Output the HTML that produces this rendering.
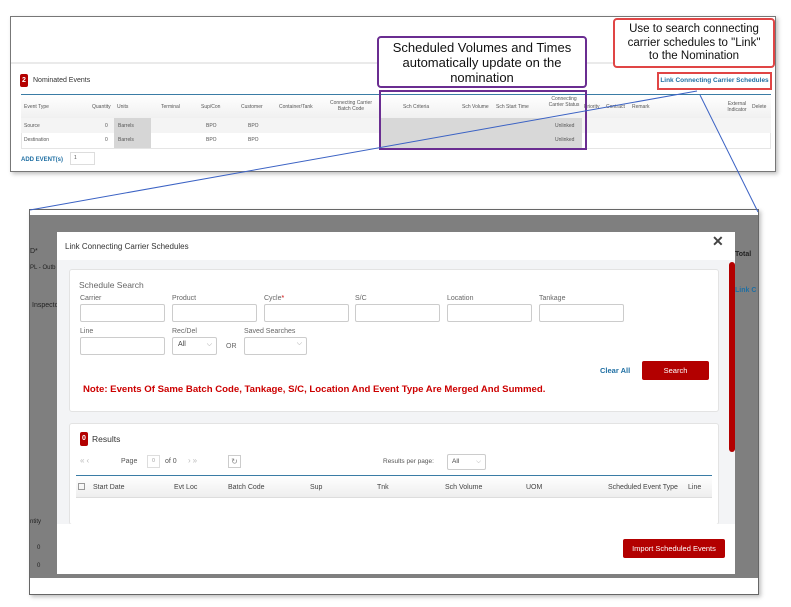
<!DOCTYPE html>
<html><head><style>
*{box-sizing:border-box;margin:0;padding:0}
body{width:791px;height:607px;position:relative;background:#fff;font-family:"Liberation Sans",Arial,sans-serif;overflow:hidden}
.a{position:absolute}
.top{left:10px;top:16px;width:766px;height:156px;border:1px solid #777;background:#fff;box-shadow:2px 2px 4px rgba(0,0,0,.25)}
.th{font-size:5px;color:#555;text-align:center;line-height:6px}
.cell{position:absolute;font-size:5px;color:#555}
.callout{background:#fff;text-align:center;font-size:13px;color:#111;line-height:15px;border-radius:4px}
.lbl{font-size:7px;color:#666}
.inp{position:absolute;height:18px;border:1px solid #ccc;border-radius:2px;background:#fff}
.hd{position:absolute;font-size:7px;color:#444;top:484px}
</style></head><body>

<div class="a top"></div>
<div class="a" style="left:11px;top:62px;width:764px;height:2px;background:#eaeaea"></div>
<div class="a" style="left:20px;top:74px;width:8px;height:13px;background:#b30000;border-radius:2px;color:#fff;font-size:7px;text-align:center;line-height:13px;font-weight:bold">2</div>
<div class="a" style="left:33px;top:77px;font-size:7px;color:#333">Nominated Events</div>
<div class="a" style="left:21px;top:94px;width:750px;height:1px;background:#3a7ca5"></div>
<div class="a" style="left:21px;top:95px;width:750px;height:54px;background:#fff;border:1px solid #e5e5e5"></div>
<div class="a" style="left:21px;top:95px;width:750px;height:23px;background:linear-gradient(#fff,#f0f0f0)"></div>
<div class="a" style="left:21px;top:118px;width:750px;height:15px;background:#f4f4f4"></div>
<div class="a" style="left:114px;top:118px;width:37px;height:30px;background:#d6d6d6"></div>
<div class="a" style="left:379px;top:118px;width:203px;height:30px;background:#d8d8d8"></div>
<div class="th a" style="left:24px;top:104px">Event Type</div>
<div class="th a" style="left:92px;top:104px">Quantity</div>
<div class="th a" style="left:117px;top:104px">Units</div>
<div class="th a" style="left:161px;top:104px">Terminal</div>
<div class="th a" style="left:201px;top:104px">Sup/Con</div>
<div class="th a" style="left:241px;top:104px">Customer</div>
<div class="th a" style="left:279px;top:104px">Container/Tank</div>
<div class="th a" style="left:326px;top:100px;width:50px">Connecting Carrier Batch Code</div>
<div class="th a" style="left:403px;top:104px">Sch Criteria</div>
<div class="th a" style="left:462px;top:104px">Sch Volume</div>
<div class="th a" style="left:496px;top:104px">Sch Start Time</div>
<div class="th a" style="left:547px;top:96px;width:34px">Connecting Carrier Status</div>
<div class="th a" style="left:584px;top:104px">Priority</div>
<div class="th a" style="left:606px;top:104px">Contract</div>
<div class="th a" style="left:632px;top:104px">Remark</div>
<div class="th a" style="left:725px;top:101px;width:24px">External Indicator</div>
<div class="th a" style="left:752px;top:104px">Delete</div>
<div class="cell" style="left:24px;top:123px">Source</div>
<div class="cell" style="left:24px;top:137px">Destination</div>
<div class="cell" style="left:105px;top:123px">0</div><div class="cell" style="left:105px;top:137px">0</div>
<div class="cell" style="left:118px;top:123px">Barrels</div><div class="cell" style="left:118px;top:137px">Barrels</div>
<div class="cell" style="left:206px;top:123px">BPO</div><div class="cell" style="left:206px;top:137px">BPO</div>
<div class="cell" style="left:248px;top:123px">BPO</div><div class="cell" style="left:248px;top:137px">BPO</div>
<div class="cell" style="left:555px;top:123px">Unlinked</div><div class="cell" style="left:555px;top:137px">Unlinked</div>
<div class="a" style="left:21px;top:157px;font-size:6px;color:#1f6fa3;font-weight:bold">ADD EVENT(s)</div>
<div class="a" style="left:70px;top:152px;width:25px;height:13px;border:1px solid #ddd;font-size:5px;color:#555;padding:2px 3px">1</div>

<div class="a callout" style="left:377px;top:36px;width:210px;height:52px;border:2px solid #6a2d91;padding-top:2px">Scheduled Volumes and Times<br>automatically update on the<br>nomination</div>
<div class="a" style="left:379px;top:90px;width:208px;height:60px;border:2px solid #6a2d91"></div>
<div class="a callout" style="left:613px;top:18px;width:162px;height:50px;border:2px solid #e04545;font-size:11.5px;line-height:13.5px;padding-top:3px">Use to search connecting<br>carrier schedules to "Link"<br>to the Nomination</div>
<div class="a" style="left:657px;top:72px;width:115px;height:18px;border:2px solid #e04545;font-size:6.5px;color:#1f6fa3;font-weight:bold;text-align:center;line-height:14px">Link Connecting Carrier Schedules</div>

<div class="a" style="left:29px;top:209px;width:730px;height:386px;border:1px solid #666;background:#7f7f7f;box-shadow:2px 2px 4px rgba(0,0,0,.25)"></div>
<div class="a" style="left:30px;top:210px;width:728px;height:5px;background:#fff"></div>
<div class="a" style="left:30px;top:578px;width:728px;height:16px;background:#fff"></div>
<div class="a" style="left:30px;top:248px;font-size:7px;color:#222">D*</div>
<div class="a" style="left:30px;top:265px;font-size:6px;color:#222">PL - Outb</div>
<div class="a" style="left:32px;top:302px;font-size:7px;color:#222">Inspecto</div>
<div class="a" style="left:735px;top:251px;font-size:7px;color:#222;font-weight:bold">Total</div>
<div class="a" style="left:735px;top:287px;font-size:7px;color:#1f6fa3;font-weight:bold">Link C</div>
<div class="a" style="left:30px;top:519px;font-size:6px;color:#222">ntity</div>
<div class="a" style="left:37px;top:545px;font-size:6px;color:#222">0</div>
<div class="a" style="left:37px;top:563px;font-size:6px;color:#222">0</div>

<div class="a" style="left:57px;top:232px;width:678px;height:342px;background:#f3f4f6"></div>
<div class="a" style="left:57px;top:232px;width:678px;height:28px;background:#fff"></div>
<div class="a" style="left:65px;top:242px;font-size:8px;color:#333">Link Connecting Carrier Schedules</div>
<div class="a" style="left:712px;top:233px;font-size:14px;color:#444;font-weight:bold">✕</div>
<div class="a" style="left:729px;top:262px;width:6px;height:190px;background:#b30000;border-radius:3px"></div>

<div class="a" style="left:69px;top:269px;width:650px;height:143px;background:#fff;border:1px solid #e3e3e3;border-radius:3px"></div>
<div class="a" style="left:79px;top:280px;font-size:8.5px;color:#666">Schedule Search</div>
<div class="a lbl" style="left:80px;top:295px">Carrier</div>
<div class="a lbl" style="left:172px;top:295px">Product</div>
<div class="a lbl" style="left:264px;top:295px">Cycle<span style="color:#c00">*</span></div>
<div class="a lbl" style="left:355px;top:295px">S/C</div>
<div class="a lbl" style="left:447px;top:295px">Location</div>
<div class="a lbl" style="left:539px;top:295px">Tankage</div>
<div class="inp" style="left:80px;top:304px;width:85px"></div>
<div class="inp" style="left:172px;top:304px;width:85px"></div>
<div class="inp" style="left:264px;top:304px;width:85px"></div>
<div class="inp" style="left:355px;top:304px;width:85px"></div>
<div class="inp" style="left:447px;top:304px;width:85px"></div>
<div class="inp" style="left:539px;top:304px;width:85px"></div>
<div class="a lbl" style="left:80px;top:328px">Line</div>
<div class="a lbl" style="left:172px;top:328px">Rec/Del</div>
<div class="a lbl" style="left:244px;top:328px">Saved Searches</div>
<div class="inp" style="left:80px;top:337px;width:85px"></div>
<div class="inp" style="left:172px;top:337px;width:45px;font-size:7px;color:#444;padding:3px 5px">All<span style="position:absolute;right:4px;color:#999">⌵</span></div>
<div class="a lbl" style="left:226px;top:343px">OR</div>
<div class="inp" style="left:244px;top:337px;width:63px"><span style="position:absolute;right:4px;top:2px;font-size:7px;color:#999">⌵</span></div>
<div class="a" style="left:600px;top:366px;font-size:7.5px;color:#1f6fa3;font-weight:bold">Clear All</div>
<div class="a" style="left:642px;top:361px;width:67px;height:19px;background:#b30000;border-radius:2px;color:#fff;font-size:7.5px;text-align:center;line-height:19px">Search</div>
<div class="a" style="left:83px;top:384px;font-size:9.6px;color:#c00;font-weight:bold;white-space:nowrap">Note: Events Of Same Batch Code, Tankage, S/C, Location And Event Type Are Merged And Summed.</div>

<div class="a" style="left:69px;top:423px;width:650px;height:102px;background:#fff;border:1px solid #e3e3e3;border-radius:3px"></div>
<div class="a" style="left:80px;top:432px;width:8px;height:14px;background:#b30000;border-radius:2px;color:#fff;font-size:7px;text-align:center;line-height:14px;font-weight:bold">0</div>
<div class="a" style="left:92px;top:434px;font-size:8.5px;color:#333">Results</div>
<div class="a" style="left:80px;top:456px;font-size:8px;color:#bbb;letter-spacing:2px">«‹</div>
<div class="a" style="left:121px;top:458px;font-size:7px;color:#555">Page</div>
<div class="a" style="left:147px;top:455px;width:13px;height:13px;border:1px solid #ddd;font-size:5px;color:#999;text-align:center;line-height:11px">0</div>
<div class="a" style="left:165px;top:458px;font-size:7px;color:#555">of 0</div>
<div class="a" style="left:188px;top:456px;font-size:8px;color:#bbb;letter-spacing:2px">›»</div>
<div class="a" style="left:228px;top:455px;width:13px;height:13px;border:1px solid #ccc;font-size:8px;color:#888;text-align:center;line-height:12px">↻</div>
<div class="a" style="left:383px;top:458px;font-size:6.5px;color:#555">Results per page:</div>
<div class="inp" style="left:447px;top:454px;width:39px;height:16px;font-size:6.5px;color:#444;padding:3px 4px">All<span style="position:absolute;right:4px;color:#999">⌵</span></div>
<div class="a" style="left:76px;top:475px;width:636px;height:1.5px;background:#3a7ca5"></div>
<div class="a" style="left:76px;top:476px;width:636px;height:22px;background:linear-gradient(#fff,#eee);border-bottom:1px solid #ddd"></div>
<div class="a" style="left:78px;top:483px;width:7px;height:7px;border:1px solid #999"></div>
<div class="hd" style="left:93px">Start Date</div>
<div class="hd" style="left:174px">Evt Loc</div>
<div class="hd" style="left:228px">Batch Code</div>
<div class="hd" style="left:310px">Sup</div>
<div class="hd" style="left:377px">Tnk</div>
<div class="hd" style="left:445px">Sch Volume</div>
<div class="hd" style="left:526px">UOM</div>
<div class="hd" style="left:608px">Scheduled Event Type</div>
<div class="hd" style="left:688px">Line</div>

<div class="a" style="left:57px;top:524px;width:678px;height:50px;background:#fff"></div>
<div class="a" style="left:623px;top:539px;width:102px;height:19px;background:#b30000;border-radius:2px;color:#fff;font-size:7.5px;text-align:center;line-height:19px">Import Scheduled Events</div>

<svg class="a" style="left:0;top:0" width="791" height="607">
<line x1="697" y1="91" x2="30" y2="210" stroke="#3b62c4" stroke-width="1"/>
<line x1="700" y1="95" x2="758" y2="212" stroke="#3b62c4" stroke-width="1"/>
</svg>
</body></html>
